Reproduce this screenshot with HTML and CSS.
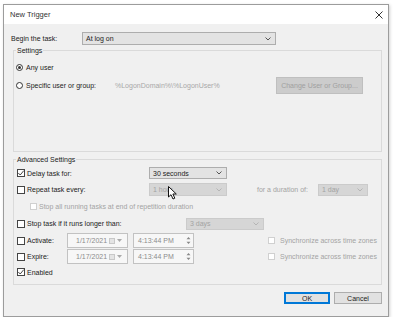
FILE: index.html
```html
<!DOCTYPE html>
<html lang="en">
<head>
  <meta charset="UTF-8" />
  <title>New Trigger</title>
  <link rel="stylesheet" href="styles.css">
</head>
<body>
  <div class="dialog">
    <div class="titlebar">
      <span class="title">New Trigger</span>
      <svg class="close" width="8" height="8" viewBox="0 0 8 8"><path d="M0.5 0.5 L7.5 7.5 M7.5 0.5 L0.5 7.5" stroke="#333" stroke-width="1"/></svg>
    </div>

    <div class="content">
      <div class="begin-row">
        <span class="begin-label">Begin the task:</span>
        <div class="combo combo-begin">
          <span>At log on</span>
          <svg class="chev" width="6" height="4" viewBox="0 0 6 4"><path d="M0.5 0.5 L3 3 L5.5 0.5" fill="none" stroke="#555"/></svg>
        </div>
      </div>

      <fieldset class="group group-settings">
        <legend>Settings</legend>
        <div class="radio-row">
          <span class="radio checked"></span>
          <span class="radio-label">Any user</span>
        </div>
        <div class="radio-row specific-row">
          <span class="radio"></span>
          <span class="radio-label specific-label">Specific user or group:</span>
          <span class="user-name">%LogonDomain%\%LogonUser%</span>
          <button class="btn btn-disabled change-btn">Change User or Group...</button>
        </div>
      </fieldset>

      <fieldset class="group group-advanced">
        <legend>Advanced Settings</legend>
        <div class="adv-rows">
          <div class="row row-delay">
            <span class="check checked"><svg width="8" height="8" viewBox="0 0 8 8"><path d="M1.3 4 L3.2 6 L6.8 1.6" fill="none" stroke="#333" stroke-width="0.9"/></svg></span>
            <span class="row-label w-delay">Delay task for:</span>
            <div class="combo combo-delay">
              <span>30 seconds</span>
              <svg class="chev" width="6" height="4" viewBox="0 0 6 4"><path d="M0.5 0.5 L3 3 L5.5 0.5" fill="none" stroke="#555"/></svg>
            </div>
          </div>

          <div class="row row-repeat">
            <span class="check"></span>
            <span class="row-label w-delay">Repeat task every:</span>
            <div class="combo combo-disabled combo-repeat">
              <span>1 hour</span>
              <svg class="chev" width="6" height="4" viewBox="0 0 6 4"><path d="M0.5 0.5 L3 3 L5.5 0.5" fill="none" stroke="#b5b5b5"/></svg>
            </div>
            <span class="muted duration-label">for a duration of:</span>
            <div class="combo combo-disabled combo-duration">
              <span>1 day</span>
              <svg class="chev" width="6" height="4" viewBox="0 0 6 4"><path d="M0.5 0.5 L3 3 L5.5 0.5" fill="none" stroke="#b5b5b5"/></svg>
            </div>
          </div>

          <div class="row row-stopall">
            <span class="check check-disabled check-small"></span>
            <span class="muted stopall-label">Stop all running tasks at end of repetition duration</span>
          </div>

          <div class="row row-stop">
            <span class="check"></span>
            <span class="row-label w-stop">Stop task if it runs longer than:</span>
            <div class="combo combo-disabled combo-stop">
              <span>3 days</span>
              <svg class="chev" width="6" height="4" viewBox="0 0 6 4"><path d="M0.5 0.5 L3 3 L5.5 0.5" fill="none" stroke="#b5b5b5"/></svg>
            </div>
          </div>

          <div class="row row-date">
            <span class="check"></span>
            <span class="row-label w-date">Activate:</span>
            <div class="field date-field">
              <span class="field-text">1/17/2021</span>
              <span class="cal-icon"></span>
              <svg class="cal-arrow" width="5" height="3" viewBox="0 0 5 3"><path d="M0 0 L5 0 L2.5 3 Z" fill="#aaa"/></svg>
            </div>
            <div class="field time-field">
              <span class="field-text">4:13:44 PM</span>
              <span class="spin"><svg width="5" height="9" viewBox="0 0 5 9"><path d="M2.5 1 L4.5 3.2 L0.5 3.2 Z M0.5 5.8 L4.5 5.8 L2.5 8 Z" fill="#888"/></svg></span>
            </div>
            <span class="check check-disabled check-small sync-check"></span>
            <span class="muted sync-label">Synchronize across time zones</span>
          </div>

          <div class="row row-date row-expire">
            <span class="check"></span>
            <span class="row-label w-date">Expire:</span>
            <div class="field date-field">
              <span class="field-text">1/17/2021</span>
              <span class="cal-icon"></span>
              <svg class="cal-arrow" width="5" height="3" viewBox="0 0 5 3"><path d="M0 0 L5 0 L2.5 3 Z" fill="#aaa"/></svg>
            </div>
            <div class="field time-field">
              <span class="field-text">4:13:44 PM</span>
              <span class="spin"><svg width="5" height="9" viewBox="0 0 5 9"><path d="M2.5 1 L4.5 3.2 L0.5 3.2 Z M0.5 5.8 L4.5 5.8 L2.5 8 Z" fill="#888"/></svg></span>
            </div>
            <span class="check check-disabled check-small sync-check"></span>
            <span class="muted sync-label">Synchronize across time zones</span>
          </div>

          <div class="row row-enabled">
            <span class="check checked"><svg width="8" height="8" viewBox="0 0 8 8"><path d="M1.3 4 L3.2 6 L6.8 1.6" fill="none" stroke="#333" stroke-width="0.9"/></svg></span>
            <span class="row-label">Enabled</span>
          </div>
        </div>
      </fieldset>

      <div class="buttons">
        <button class="btn btn-ok">OK</button>
        <button class="btn btn-cancel">Cancel</button>
      </div>
    </div>
  </div>

  <svg class="cursor" width="11" height="14" viewBox="0 0 11 14"><path d="M0.5 0.5 L0.5 11 L3 8.7 L5 13 L6.8 12.2 L4.9 8 L8.3 8 Z" fill="#fff" stroke="#111" stroke-width="1" stroke-linejoin="round"/></svg>
</body>
</html>
```

FILE: styles.css
```css
body {
  margin: 0;
  background: #fff;
  font-family: "Liberation Sans", Arial, sans-serif;
  font-size: 7px;
  line-height: 9px;
  color: #222;
}

.dialog {
  margin: 4px 0 0 3px;
  width: 384px;
  height: 311px;
  border: 1px solid #9c9c9c;
  background: #f0f0f0;
  box-shadow: 1px 1px 3px rgba(0,0,0,0.18);
  display: flex;
  flex-direction: column;
}

.titlebar {
  height: 19px;
  background: #fff;
  display: flex;
  align-items: center;
  justify-content: space-between;
  padding: 0 5px 0 6px;
}

.title {
  font-size: 7.5px;
  color: #333;
}

.content {
  flex: 1;
  padding: 8px 6px 0 7px;
  display: flex;
  flex-direction: column;
}

.begin-row {
  display: flex;
  align-items: center;
  height: 13px;
}

.begin-label {
  width: 71px;
}

.combo {
  box-sizing: border-box;
  border: 1px solid #adadad;
  background: #e3e3e3;
  display: flex;
  align-items: center;
  justify-content: space-between;
  padding: 0 4px 0 3px;
}

.combo-disabled {
  border-color: #cbcbcb;
  background: #d6d6d6;
  color: #a3a3a3;
}

.combo-begin {
  width: 194px;
  height: 13px;
}

.group {
  margin: 1px 0 0 2px;
  padding: 0 2px;
  border: 1px solid #dadada;
  min-width: 0;
}

.group legend {
  padding: 0 1px;
  line-height: 9px;
}

.group-settings {
  padding-bottom: 57px;
}

.group-advanced {
  margin-top: 3px;
  padding-bottom: 4px;
}

.radio-row {
  display: flex;
  align-items: center;
  height: 12px;
  margin-top: 6px;
}

.specific-row {
  height: 17px;
  margin-top: 4px;
}

.radio {
  box-sizing: border-box;
  width: 7px;
  height: 7px;
  border: 1px solid #333;
  border-radius: 50%;
  background: #fff;
  display: flex;
  align-items: center;
  justify-content: center;
}

.radio.checked::after {
  content: "";
  width: 3px;
  height: 3px;
  border-radius: 50%;
  background: #333;
}

.radio-label {
  margin-left: 3px;
}

.specific-label {
  width: 89px;
}

.user-name {
  color: #a8a8a8;
  flex: 1;
}

.btn {
  box-sizing: border-box;
  font-family: inherit;
  font-size: 7px;
  line-height: 9px;
  padding: 0;
  border: 1px solid #adadad;
  background: #e1e1e1;
  color: #222;
}

.btn-disabled {
  border-color: #bfbfbf;
  background: #cccccc;
  color: #a0a0a0;
}

.change-btn {
  width: 87px;
  height: 17px;
  margin-right: 16px;
}

.adv-rows {
  margin-top: 1px;
  display: flex;
  flex-direction: column;
}

.row {
  display: flex;
  align-items: center;
  height: 17px;
}

.row-delay {
  height: 16px;
}

.row-expire {
  height: 15px;
}

.row-enabled {
  height: 16px;
}

.check {
  box-sizing: border-box;
  width: 8px;
  height: 8px;
  margin-left: 1px;
  border: 1px solid #444;
  background: #fff;
  display: flex;
}

.check svg {
  margin: -1px;
}

.check-disabled {
  border-color: #d0d0d0;
}

.check-small {
  width: 7px;
  height: 7px;
}

.row-label {
  margin-left: 2px;
}

.w-delay {
  width: 122px;
}

.w-stop {
  width: 159px;
}

.w-date {
  width: 40px;
}

.muted {
  color: #a3a3a3;
}

.combo-delay {
  width: 78px;
  height: 12px;
}

.combo-repeat {
  width: 78px;
  height: 13px;
}

.duration-label {
  width: 61px;
  margin-left: 30px;
}

.combo-duration {
  width: 50px;
  height: 12px;
}

.row-stopall .check {
  margin-left: 14px;
}

.stopall-label {
  margin-left: 2px;
}

.combo-stop {
  width: 78px;
  height: 12px;
}

.field {
  box-sizing: border-box;
  width: 61px;
  height: 15px;
  border: 1px solid #c2c2c2;
  background: #f7f7f7;
  color: #8c8c8c;
  display: flex;
  align-items: center;
}

.field-text {
  margin-left: 8px;
  flex: 1;
}

.time-field {
  margin-left: 5px;
}

.time-field .field-text {
  margin-left: 4px;
}

.cal-icon {
  box-sizing: border-box;
  width: 6px;
  height: 6px;
  border: 1px solid #c8c8c8;
  background: #e4e4e4;
  margin-right: 2px;
}

.cal-arrow {
  margin-right: 5px;
}

.spin {
  display: flex;
  margin-right: 2px;
}

.sync-check {
  margin-left: 74px;
}

.sync-label {
  margin-left: 5px;
}

.buttons {
  display: flex;
  justify-content: flex-end;
  gap: 4px;
  margin-top: 7px;
}

.btn-ok {
  width: 46px;
  height: 12px;
  border-color: #0078d7;
  box-shadow: inset 0 0 0 1px #0078d7;
}

.btn-cancel {
  width: 48px;
  height: 12px;
}

.cursor {
  position: absolute;
  left: 168px;
  top: 186px;
}
```
